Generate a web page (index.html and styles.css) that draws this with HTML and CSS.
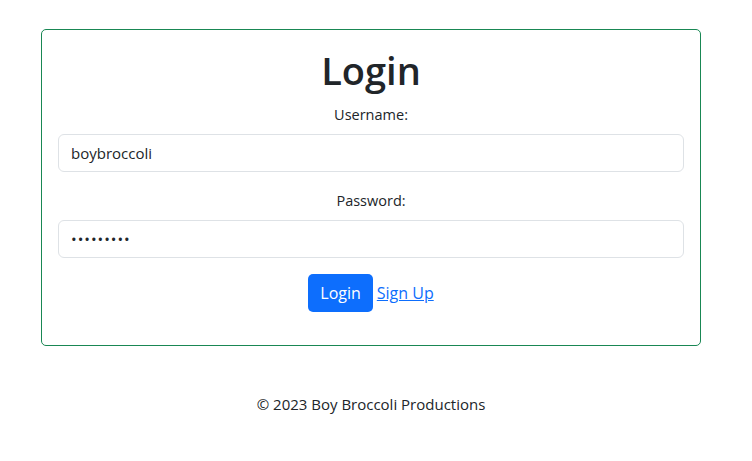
FILE: index.html
```html
<!DOCTYPE html>
<html lang="en">
<head>
    <meta charset="UTF-8">
    <title>Login</title>
    <link rel="stylesheet" href="styles.css">
</head>

<body>

<main class="page">
    <!-- Login card -->
    <form class="login-card" onsubmit="return false;">
        <h1 class="login-title">Login</h1>

        <label class="field-label" for="username">Username:</label>
        <input class="field-input" type="text" id="username" name="username" value="boybroccoli">

        <label class="field-label" for="password">Password:</label>
        <input class="field-input" type="password" id="password" name="password" value="broccoli1">

        <div class="actions">
            <button class="btn-login" type="submit">Login</button>
            <a class="signup-link" href="#">Sign Up</a>
        </div>
    </form>

    <footer class="footer">
        <p>&copy; 2023 Boy Broccoli Productions</p>
    </footer>
</main>

</body>
</html>
```

FILE: styles.css
```css
/* Page styling */
body {
    margin: 0;
    font-family: 'Open Sans', 'Noto Sans', sans-serif;
    font-size: 16px;
    line-height: 1.5;
    color: #212529;
    background-color: #FFFFFF;
}

.page {
    padding: 29px 51px 0 41px;
}

/* Card holding the form */
.login-card {
    display: flex;
    flex-direction: column;
    align-items: stretch;
    padding: 16px 16px 33px;
    border: 1px solid #198754; /* Green border */
    border-radius: 5px;
}

.login-title {
    margin: 2px 0 9px;
    font-size: 38px;
    font-weight: 600;
    line-height: 1.2;
    text-align: center;
}

/* Labels styling */
.field-label {
    display: block;
    margin-bottom: 7px;
    text-align: center;
    font-size: 14.5px;
    line-height: 24px;
}

/* Text inputs */
.field-input {
    height: 38px;
    margin: 0 0 17px;
    padding: 6px 12px;
    border: 1px solid #DEE2E6;
    border-radius: 6px;
    box-sizing: border-box;
    font-family: inherit;
    font-size: 15px;
    color: #212529;
}

.field-input[type="password"] {
    margin-bottom: 16px;
    letter-spacing: 1px;
}

/* Button row */
.actions {
    display: flex;
    justify-content: center;
    align-items: baseline;
    gap: 4px;
}

.btn-login {
    height: 38px;
    padding: 6px 12px;
    border: none;
    border-radius: 5px;
    background-color: #0D6EFD;
    color: white;
    font-family: inherit;
    font-size: 16px;
    cursor: pointer;
}

.signup-link {
    color: #0D6EFD;
    font-size: 16px;
}

/* Footer */
.footer {
    margin-top: 47px;
    text-align: center;
    font-size: 15px;
}

.footer p {
    margin: 0;
}
```
